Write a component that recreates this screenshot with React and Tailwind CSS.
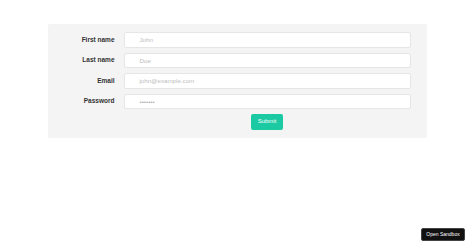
export default function App() {
  const rows = [
    ["First name", "John"],
    ["Last name", "Doe"],
    ["Email", "john@example.com"],
    ["Password", "•••••••"],
  ];
  return (
    <div className="relative w-[474px] h-[248px] bg-white" style={{ fontFamily: '"Liberation Sans", Arial, sans-serif' }}>
      <div className="pt-[24px]">
        <div className="mx-auto w-[379px] bg-[#f4f4f4] rounded-[2px] pt-[8px] pb-[8px] pr-[16px]">
          <div className="flex flex-col gap-[5px]">
            {rows.map(([label, ph]) => (
              <div key={label} className="flex items-center">
                <div className="w-[67px] text-right text-[6.5px] font-bold text-[#333]">{label}</div>
                <div className="ml-[9px] flex-1 h-[15.5px] bg-white border border-[#e6e6e6] rounded-[2px] flex items-center pl-[15px]">
                  <span className={"text-[6.2px] " + (label === "Password" ? "text-[#b0b0b0] text-[5px]" : "text-[#bdbdbd]")}>{ph}</span>
                </div>
              </div>
            ))}
            <div className="flex -mt-[0.5px]">
              <div className="w-[76px]" />
              <div className="flex-1 flex justify-center">
                <button className="w-[32px] h-[16px] bg-[#1bcaa2] rounded-[2px] text-white text-[6px] flex items-center justify-center">Submit</button>
              </div>
            </div>
          </div>
        </div>
      </div>
      <div className="absolute right-[9px] bottom-[7px] w-[44px] h-[13px] bg-[#111] border border-[#444] rounded-[2px] flex items-center justify-center text-white text-[5px]">
        Open Sandbox
      </div>
    </div>
  );
}
